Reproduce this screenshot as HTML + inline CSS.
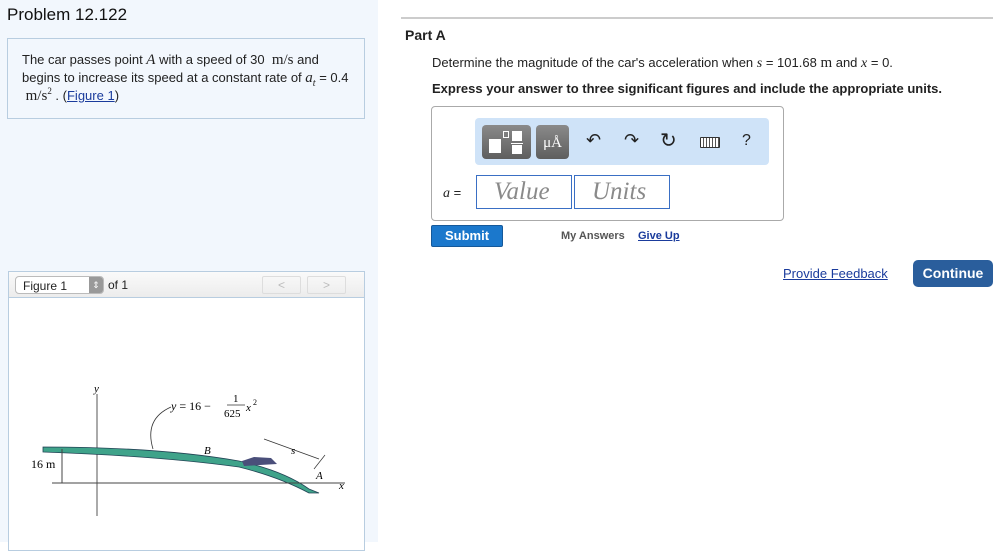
<!DOCTYPE html>
<html><head><meta charset="utf-8"><style>
*{margin:0;padding:0;box-sizing:border-box}
body{width:993px;height:542px;overflow:hidden;background:#fff;font-family:"Liberation Sans",Arial,sans-serif;color:#222;position:relative}
.left{position:absolute;left:0;top:0;width:378px;height:542px;background:#f2f7fd}
.title{position:absolute;left:7px;top:5px;font-size:17px;color:#111}
.prob{position:absolute;left:7px;top:38px;width:358px;height:81px;border:1px solid #b8cde0;background:#f2f7fd;font-size:13px;line-height:18px;padding:12px 0 0 14px;color:#222;white-space:nowrap}
.m{font-family:"Liberation Serif",serif;font-size:15px}
.mi{font-family:"Liberation Serif",serif;font-style:italic;font-size:15px}
sup,sub{line-height:0}
a{color:#1a3b9c;text-decoration:underline}
.fig{position:absolute;left:8px;top:271px;width:357px;height:280px;border:1px solid #b8cde0;background:#fff}
.figbar{height:26px;background:linear-gradient(#fafafa,#ececec);border-bottom:1px solid #b8cde0;position:relative}
.sel{position:absolute;left:6px;top:4px;width:89px;height:18px;border:1px solid #bbb;border-radius:4px;background:#fff;font-size:12px;padding:2px 0 0 7px}
.sel .ar{position:absolute;right:0;top:0;width:14px;height:16px;background:#999;border-radius:0 3px 3px 0;color:#fff;font-size:9px;text-align:center;line-height:16px}
.of{position:absolute;left:99px;top:6px;font-size:12px}
.nb{position:absolute;top:4px;width:39px;height:18px;border:1px solid #ddd;border-radius:2px;color:#bbb;font-size:12px;text-align:center;line-height:16px}
.hr{position:absolute;left:401px;top:17px;width:592px;height:2px;background:#ccc}
.parta{position:absolute;left:405px;top:27px;font-size:14px;font-weight:bold}
.q{position:absolute;left:432px;top:55px;font-size:13px}
.ex{position:absolute;left:432px;top:81px;font-size:13px;font-weight:bold}
.box{position:absolute;left:431px;top:106px;width:353px;height:115px;border:1px solid #aaa;border-radius:4px}
.tb{position:absolute;left:43px;top:11px;width:294px;height:47px;background:#cfe3f8;border-radius:4px}
.b1{position:absolute;left:7px;top:7px;width:49px;height:34px;border-radius:4px;background:linear-gradient(#8a8a8a,#5e5e5e)}
.b2{position:absolute;left:61px;top:7px;width:33px;height:34px;border-radius:4px;background:linear-gradient(#8a8a8a,#5e5e5e);color:#fff;font-family:"Liberation Serif",serif;font-size:15px;text-align:center;line-height:36px}
.ic{position:absolute;top:12px;font-size:18px;color:#222}
.inp{position:absolute;top:68px;height:34px;border:1px solid #3a6fc4;font-family:"Liberation Serif",serif;font-style:italic;font-size:25px;color:#8a8a8a;padding:2px 0 0 17px}
.submit{position:absolute;left:431px;top:225px;width:72px;height:22px;background:#1b78cc;border:1px solid #15599a;border-radius:2px;color:#fff;font-weight:bold;font-size:13px;text-align:center;line-height:20px}
.my{position:absolute;left:561px;top:230px;font-size:11px;font-weight:bold;color:#555}
.gu{position:absolute;left:638px;top:230px;font-size:11px;font-weight:bold;color:#1a3b9c;text-decoration:underline}
.pf{position:absolute;left:783px;top:266px;font-size:13px;color:#1a3b9c;text-decoration:underline}
.cont{position:absolute;left:913px;top:260px;width:80px;height:27px;background:#2a5e9c;border-radius:5px;color:#fff;font-weight:bold;font-size:14px;text-align:center;line-height:26px}
</style></head><body>
<div class="left">
<div class="title">Problem 12.122</div>
<div class="prob">The car passes point <span class="mi">A</span> with a speed of 30 &nbsp;<span class="m">m/s</span> and<br>begins to increase its speed at a constant rate of <span class="mi">a<sub style="font-size:10px">t</sub></span> = 0.4<br>&nbsp;<span class="m">m/s<sup style="font-size:9px">2</sup></span> . (<a>Figure 1</a>)</div>
<div class="fig">
<div class="figbar"><div class="sel">Figure 1<div class="ar">&#8661;</div></div><div class="of">of 1</div>
<div class="nb" style="left:253px">&lt;</div><div class="nb" style="left:298px">&gt;</div></div>
<svg width="357" height="260" style="position:absolute;left:0;top:27px" font-family="Liberation Serif,serif">
<line x1="88" y1="95" x2="88" y2="217" stroke="#555" stroke-width="1"/>
<text x="85" y="93" font-size="11" font-style="italic">y</text>
<path d="M34 148 Q150 148 230 162 Q275 172 300 190 L310 194 L300 194 Q270 178 230 168 Q150 157 34 153 Z" fill="#3fa38a" stroke="#245" stroke-width="0.8"/>
<line x1="43" y1="184" x2="336" y2="184" stroke="#444" stroke-width="1"/>
<text x="330" y="190" font-size="11" font-style="italic">x</text>
<line x1="53" y1="150" x2="53" y2="184" stroke="#444"/>
<text x="22" y="169" font-size="12">16 m</text>
<path d="M144 150 Q135 120 162 108" fill="none" stroke="#333" stroke-width="0.8"/>
<text x="162" y="111" font-size="12"><tspan font-style="italic">y</tspan> = 16 &#8722;</text>
<text x="224" y="103" font-size="11">1</text><line x1="218" y1="106" x2="236" y2="106" stroke="#333" stroke-width="0.7"/><text x="215" y="118" font-size="11">625</text>
<text x="237" y="112" font-size="11" font-style="italic">x</text><text x="244" y="106" font-size="8">2</text>
<text x="195" y="155" font-size="11" font-style="italic">B</text>
<path d="M233 162 L245 158 L262 159 L268 165 L235 167 Z" fill="#4a4f7a"/>
<line x1="255" y1="140" x2="310" y2="160" stroke="#333" stroke-width="0.7"/>
<text x="282" y="155" font-size="11" font-style="italic">s</text>
<line x1="305" y1="170" x2="316" y2="156" stroke="#333" stroke-width="0.7"/>
<text x="307" y="180" font-size="11" font-style="italic">A</text>
</svg>
</div>
</div>
<div class="hr"></div>
<div class="parta">Part A</div>
<div class="q">Determine the magnitude of the car's acceleration when <span class="mi" style="font-size:14px">s</span> = 101.68 <span class="m">m</span> and <span class="mi" style="font-size:14px">x</span> = 0.</div>
<div class="ex">Express your answer to three significant figures and include the appropriate units.</div>
<div class="box">
<div class="tb">
<div class="b1"><div style="position:absolute;left:7px;top:14px;width:12px;height:14px;background:#fff"></div><div style="position:absolute;left:21px;top:6px;width:6px;height:7px;border:1px solid #fff"></div><div style="position:absolute;left:30px;top:6px;width:10px;height:10px;background:#fff"></div><div style="position:absolute;left:29px;top:18px;width:12px;height:1px;background:#fff"></div><div style="position:absolute;left:30px;top:20px;width:10px;height:9px;background:#fff"></div></div>
<div class="b2">&#956;&#197;</div>
<div class="ic" style="left:111px">&#8630;</div>
<div class="ic" style="left:149px">&#8631;</div>
<div class="ic" style="left:185px;font-size:20px;top:10px">&#8635;</div>
<div style="position:absolute;left:225px;top:19px;width:20px;height:11px;border:1px solid #333;border-radius:1px;background:repeating-linear-gradient(90deg,#fff 0 2px,#555 2px 3px)"></div>
<div class="ic" style="left:267px;font-size:16px;top:14px">?</div>
</div>
<div style="position:absolute;left:11px;top:78px;font-size:13px"><span class="mi" style="font-size:14px">a</span> =</div>
<div class="inp" style="left:44px;width:96px">Value</div>
<div class="inp" style="left:142px;width:96px">Units</div>
</div>
<div class="submit">Submit</div>
<div class="my">My Answers</div>
<div class="gu">Give Up</div>
<div class="pf">Provide Feedback</div>
<div class="cont">Continue</div>
</body></html>
